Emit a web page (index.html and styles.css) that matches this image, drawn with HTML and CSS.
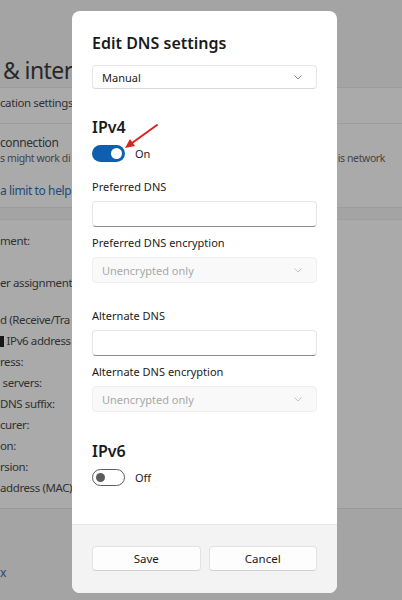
FILE: index.html
```html
<!DOCTYPE html>
<html lang="en">
<head>
  <meta charset="UTF-8">
  <title>Edit DNS settings</title>
  <link rel="stylesheet" href="styles.css">
</head>
<body>
  <div class="screen">
    <div class="backdrop">
      <div class="bg-head"><span class="bg-title">&amp; inter</span></div>
      <div class="bg-row bg-row-loc">cation settings</div>
      <div class="bg-row bg-row-meter">
        <div class="bg-label">connection</div>
        <div class="bg-desc"><span>s might work di</span><span>is network</span></div>
        <div class="bg-link">a limit to help</div>
      </div>
      <div class="bg-card">
        <div class="bg-prop">ment:</div>
        <div class="bg-prop">er assignment</div>
        <ul class="bg-list">
          <li>d (Receive/Tra</li>
          <li><b class="bg-mark">l</b> IPv6 address</li>
          <li>ress:</li>
          <li>&nbsp;servers:</li>
          <li>DNS suffix:</li>
          <li>curer:</li>
          <li>on:</li>
          <li>rsion:</li>
          <li>address (MAC)</li>
        </ul>
      </div>
      <div class="bg-foot"><span class="bg-link">x</span></div>
    </div>

    <div class="scrim"></div>

    <div class="dialog">
      <section class="dialog-body">
        <h2 class="dialog-title">Edit DNS settings</h2>
        <div class="select">
          <span>Manual</span>
          <svg class="chevron" width="8" height="5" viewBox="0 0 8 5"><path d="M0.5 0.5 L4 4 L7.5 0.5" fill="none" stroke="currentColor" stroke-width="1"/></svg>
        </div>

        <h3 class="group-title">IPv4</h3>
        <div class="switch-row">
          <span class="switch switch-on"><span class="knob"></span></span>
          <span>On</span>
        </div>

        <div class="field-label gap-first">Preferred DNS</div>
        <div class="textbox"></div>
        <div class="field-label">Preferred DNS encryption</div>
        <div class="select select-disabled">
          <span>Unencrypted only</span>
          <svg class="chevron" width="8" height="5" viewBox="0 0 8 5"><path d="M0.5 0.5 L4 4 L7.5 0.5" fill="none" stroke="currentColor" stroke-width="1"/></svg>
        </div>

        <div class="field-label gap-section">Alternate DNS</div>
        <div class="textbox"></div>
        <div class="field-label">Alternate DNS encryption</div>
        <div class="select select-disabled">
          <span>Unencrypted only</span>
          <svg class="chevron" width="8" height="5" viewBox="0 0 8 5"><path d="M0.5 0.5 L4 4 L7.5 0.5" fill="none" stroke="currentColor" stroke-width="1"/></svg>
        </div>

        <h3 class="group-title group-last">IPv6</h3>
        <div class="switch-row">
          <span class="switch switch-off"><span class="knob"></span></span>
          <span>Off</span>
        </div>
      </section>

      <footer class="dialog-foot">
        <button class="btn">Save</button>
        <button class="btn">Cancel</button>
      </footer>

      <!-- red callout pointing at the IPv4 switch -->
      <svg class="callout" width="40" height="32" viewBox="0 0 40 32">
        <line x1="35" y1="4" x2="10" y2="22" stroke="#d8231f" stroke-width="2" stroke-linecap="round"/>
        <polygon points="3,27 13,25 8,18" fill="#d8231f"/>
      </svg>
    </div>
  </div>
</body>
</html>
```

FILE: styles.css
```css
* {
  box-sizing: border-box;
}

body {
  margin: 0;
  font-family: 'Noto Sans', 'Open Sans', sans-serif;
  color: #1b1b1b;
}

.screen {
  position: relative;
  width: 402px;
  height: 600px;
  overflow: hidden;
}

/* settings page behind the dialog */
.backdrop {
  height: 100%;
  background-color: #f2f2f2;
  color: #4a4a4a;
  font-size: 11.5px;
  letter-spacing: -0.4px;
  white-space: nowrap;
}

.bg-head {
  height: 88px;
  padding: 55px 0 0 3px;
  border-bottom: 1px solid #e6e6e6;
}

.bg-title {
  font-size: 23px;
  line-height: 30px;
  letter-spacing: -0.6px;
  color: #3c3c3c;
}

.bg-row {
  background-color: #fbfbfb;
  border-bottom: 1px solid #e8e8e8;
}

.bg-row-loc {
  height: 36px;
  line-height: 30px;
}

.bg-row-meter {
  height: 84px;
  padding-top: 10px;
}

.bg-label {
  font-size: 12px;
  line-height: 18px;
}

.bg-desc {
  display: flex;
  justify-content: space-between;
  padding-right: 17px;
  font-size: 10.5px;
  line-height: 12px;
  color: #666666;
}

.bg-link {
  color: #2f6fae;
  font-size: 12px;
  line-height: 18px;
}

.bg-row-meter .bg-link {
  margin-top: 18px;
}

.bg-card {
  margin-top: 11px;
  height: 290px;
  background-color: #fbfbfb;
  border-top: 1px solid #e8e8e8;
  border-bottom: 1px solid #e2e2e2;
}

.bg-prop {
  height: 42px;
  line-height: 42px;
}

.bg-list {
  list-style: none;
  margin: 5px 0 0;
  padding: 0;
}

.bg-list li {
  height: 21px;
  line-height: 21px;
}

.bg-mark {
  font-size: 8px;
  padding: 0 1px;
  background-color: #222;
  color: #222;
}

.bg-foot {
  padding-top: 55px;
}

.scrim {
  position: absolute;
  inset: 0;
  background-color: rgba(0, 0, 0, 0.32);
}

/* dialog */
.dialog {
  position: absolute;
  left: 72px;
  top: 11px;
  width: 265px;
  height: 582px;
  display: flex;
  flex-direction: column;
  background-color: #ffffff;
  border-radius: 8px;
  overflow: hidden;
}

.dialog-body {
  flex: 1;
  padding: 20px 20px 0;
}

.dialog-title {
  margin: 0;
  font-size: 16px;
  line-height: 24px;
  font-weight: 600;
}

.select {
  display: flex;
  align-items: center;
  justify-content: space-between;
  height: 24px;
  margin-top: 10px;
  padding: 0 14px 0 9px;
  border: 1px solid #e6e6e6;
  border-bottom-color: #d9d9d9;
  border-radius: 4px;
  font-size: 11px;
  color: #1b1b1b;
}

.select .chevron {
  color: #8a8a8a;
}

.select-disabled {
  height: 26px;
  margin-top: 6px;
  background-color: #f9f9f9;
  border-color: #efefef;
  color: #a8a8a8;
}

.select-disabled .chevron {
  color: #c4c4c4;
}

.group-title {
  margin: 27px 0 0;
  font-size: 16px;
  line-height: 22px;
  font-weight: 600;
}

.group-last {
  margin-top: 28px;
}

.switch-row {
  display: flex;
  align-items: center;
  gap: 10px;
  margin-top: 7px;
  font-size: 11px;
  line-height: 17px;
}

.switch {
  display: flex;
  align-items: center;
  width: 33px;
  height: 17px;
  padding: 0 3px;
  border-radius: 9px;
}

.switch-on {
  justify-content: flex-end;
  background-color: #0f5fb0;
}

.switch-on .knob {
  width: 11px;
  height: 11px;
  border-radius: 50%;
  background-color: #ffffff;
}

.switch-off {
  border: 1px solid #5e5e5e;
}

.switch-off .knob {
  width: 9px;
  height: 9px;
  border-radius: 50%;
  background-color: #5c5c5c;
}

.field-label {
  margin-top: 8px;
  font-size: 11px;
  line-height: 16px;
  color: #1b1b1b;
}

.gap-first {
  margin-top: 17px;
}

.gap-section {
  margin-top: 25px;
}

.textbox {
  height: 26px;
  margin-top: 6px;
  border: 1px solid #e6e6e6;
  border-bottom: 1px solid #8c8c8c;
  border-radius: 4px;
  background-color: #ffffff;
}

.dialog-foot {
  display: flex;
  gap: 8px;
  padding: 21px 20px 22px;
  background-color: #f3f3f3;
  border-top: 1px solid #e5e5e5;
}

.btn {
  flex: 1;
  height: 25px;
  font-family: inherit;
  font-size: 11.5px;
  color: #1b1b1b;
  background-color: #fdfdfd;
  border: 1px solid #e3e3e3;
  border-bottom-color: #d2d2d2;
  border-radius: 4px;
}

.callout {
  position: absolute;
  left: 50px;
  top: 110px;
}
```
